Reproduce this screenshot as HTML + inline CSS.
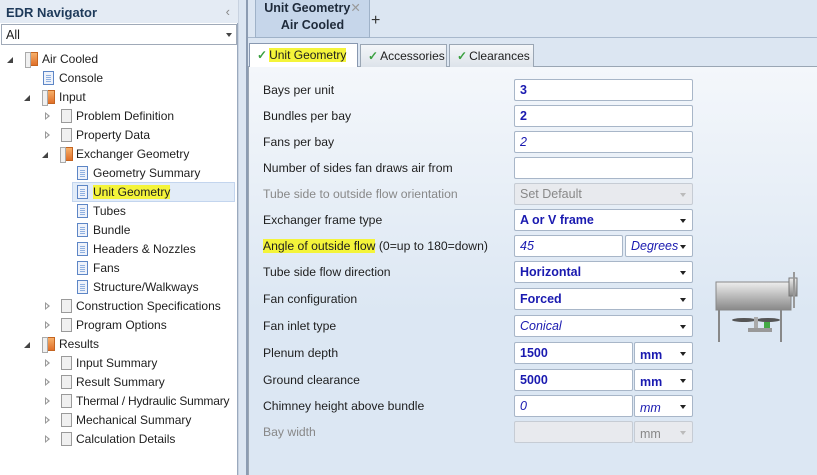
<!DOCTYPE html>
<html><head><style>
*{box-sizing:border-box;margin:0;padding:0}
body{width:817px;height:475px;overflow:hidden;font-family:"Liberation Sans",sans-serif;font-size:12px;color:#1e1e1e;background:#dce6f2;position:relative}
.abs{position:absolute}
#left{left:0;top:0;width:238px;height:475px;background:#fff;border-right:1px solid #9aa9bd}
#lh{left:0;top:0;width:238px;height:23px;background:#e4ebf4;font-weight:bold;font-size:13px;padding:5px 6px;color:#1e3a5a}
#dd{left:1px;top:24px;width:236px;height:21px;border:1px solid #a0aab8;background:#fff;padding:3px 4px;font-size:12.5px}
#dd:after{content:"";position:absolute;right:4px;top:8px;border:3.5px solid transparent;border-top:4px solid #444}
.tr{position:absolute;font-size:12px;white-space:nowrap;line-height:16px}
.tri{position:absolute;width:0;height:0}
.exp{border-left:6px solid transparent;border-bottom:6px solid #444}
.col{border-top:4px solid transparent;border-bottom:4px solid transparent;border-left:5px solid #999}
.col:after{content:"";position:absolute;left:-4px;top:-2px;border-top:2px solid transparent;border-bottom:2px solid transparent;border-left:2px solid #fff}
.ic{position:absolute;width:11px;height:14px}
.fo{background:linear-gradient(#f7b06a,#e0702a);border:1px solid #c46420}
.fo:before{content:"";position:absolute;left:-3px;top:-1px;width:4px;height:14px;background:#f0f0f0;border:1px solid #aaa}
.pg{background:#eef2fa;border:1px solid #5d86c6}
.pg:before{content:"";position:absolute;left:2px;top:3px;width:5px;height:7px;background:repeating-linear-gradient(#8fb0e0 0 1px,transparent 1px 2px)}
.gp{background:#f0f0f0;border:1px solid #9a9a9a}
#sep{left:238px;top:0;width:10px;height:475px;background:#dce6f2;border-right:2px solid #8c9cb2;border-left:1px solid #c8d2e0}
#tabbar{left:248px;top:0;width:569px;height:38px;background:#dce6f2;border-bottom:1px solid #a8b8cc}
#doctab{left:255px;top:0;width:115px;height:38px;background:#c6d6ea;border:1px solid #9fb2c8;border-top:none;font-weight:bold;font-size:12.5px;text-align:center;line-height:17px;padding-top:0;color:#1e2a3a}
.it{position:absolute;top:44px;height:23px;border:1px solid #9aa6b4;border-bottom:none;background:linear-gradient(#f4f6f9,#dde3ea);font-size:12px;padding:4px 4px 0 7px;white-space:nowrap}
.it b{color:#3aa040;font-weight:bold;margin-right:2px}
#panel{left:248px;top:66px;width:569px;height:409px;border:1px solid #9aa6b4;border-right:none;border-bottom:none;background:linear-gradient(#f4f7fb,#dce7f3 60%)}
.lb{position:absolute;left:263px;font-size:12.2px}
.in{position:absolute;height:22px;background:#fff;border:1px solid #a8b6c8;font-size:12.5px;color:#1a1ab0;padding:3px 5px;border-radius:2px}
.bd{font-weight:bold}
.itl{font-style:italic}
.sel:after{content:"";position:absolute;right:6px;top:9px;border:3.5px solid transparent;border-top:4px solid #222}
.dis{background:#e8eaee;color:#888;border-color:#c6ccd4}
.dis.sel:after{border-top-color:#bbb}
.hl{background:#f4f43a}
</style></head><body>
<div id="left" class="abs"></div>
<div id="lh" class="abs">EDR Navigator<span style="position:absolute;right:8px;top:4px;color:#888;font-weight:normal">‹</span></div>
<div id="dd" class="abs">All</div>
<div class="abs" style="left:72px;top:182px;width:163px;height:20px;background:#e2ecf8;border:1px solid #c3d5ee"></div>

<div class="tri exp" style="left:7px;top:57px"></div><div class="ic fo" style="left:27px;top:52px"></div><div class="tr" style="left:42px;top:51px">Air Cooled</div>
<div class="ic pg" style="left:43px;top:71px"></div><div class="tr" style="left:59px;top:70px">Console</div>
<div class="tri exp" style="left:24px;top:95px"></div><div class="ic fo" style="left:44px;top:90px"></div><div class="tr" style="left:59px;top:89px">Input</div>
<div class="tri col" style="left:45px;top:112px"></div><div class="ic gp" style="left:61px;top:109px"></div><div class="tr" style="left:76px;top:108px">Problem Definition</div>
<div class="tri col" style="left:45px;top:131px"></div><div class="ic gp" style="left:61px;top:128px"></div><div class="tr" style="left:76px;top:127px">Property Data</div>
<div class="tri exp" style="left:42px;top:152px"></div><div class="ic fo" style="left:62px;top:147px"></div><div class="tr" style="left:76px;top:146px">Exchanger Geometry</div>
<div class="ic pg" style="left:77px;top:166px"></div><div class="tr" style="left:93px;top:165px">Geometry Summary</div>
<div class="ic pg" style="left:77px;top:185px"></div><div class="tr" style="left:93px;top:184px"><span class="hl">Unit Geometry</span></div>
<div class="ic pg" style="left:77px;top:204px"></div><div class="tr" style="left:93px;top:203px">Tubes</div>
<div class="ic pg" style="left:77px;top:223px"></div><div class="tr" style="left:93px;top:222px">Bundle</div>
<div class="ic pg" style="left:77px;top:242px"></div><div class="tr" style="left:93px;top:241px">Headers &amp; Nozzles</div>
<div class="ic pg" style="left:77px;top:261px"></div><div class="tr" style="left:93px;top:260px">Fans</div>
<div class="ic pg" style="left:77px;top:280px"></div><div class="tr" style="left:93px;top:279px">Structure/Walkways</div>
<div class="tri col" style="left:45px;top:302px"></div><div class="ic gp" style="left:61px;top:299px"></div><div class="tr" style="left:76px;top:298px">Construction Specifications</div>
<div class="tri col" style="left:45px;top:321px"></div><div class="ic gp" style="left:61px;top:318px"></div><div class="tr" style="left:76px;top:317px">Program Options</div>
<div class="tri exp" style="left:24px;top:342px"></div><div class="ic fo" style="left:44px;top:337px"></div><div class="tr" style="left:59px;top:336px">Results</div>
<div class="tri col" style="left:45px;top:359px"></div><div class="ic gp" style="left:61px;top:356px"></div><div class="tr" style="left:76px;top:355px">Input Summary</div>
<div class="tri col" style="left:45px;top:378px"></div><div class="ic gp" style="left:61px;top:375px"></div><div class="tr" style="left:76px;top:374px">Result Summary</div>
<div class="tri col" style="left:45px;top:397px"></div><div class="ic gp" style="left:61px;top:394px"></div><div class="tr" style="left:76px;top:393px;letter-spacing:-0.2px">Thermal / Hydraulic Summary</div>
<div class="tri col" style="left:45px;top:416px"></div><div class="ic gp" style="left:61px;top:413px"></div><div class="tr" style="left:76px;top:412px">Mechanical Summary</div>
<div class="tri col" style="left:45px;top:435px"></div><div class="ic gp" style="left:61px;top:432px"></div><div class="tr" style="left:76px;top:431px">Calculation Details</div>

<div id="sep" class="abs"></div>
<div id="tabbar" class="abs"></div>
<div id="doctab" class="abs">Unit Geometry<span style="color:#999;font-weight:normal">✕</span><br>Air Cooled</div>
<div class="abs" style="left:371px;top:12px;font-size:16px;color:#333">+</div>
<div id="panel" class="abs"></div>
<div class="it" style="left:249px;top:43px;height:24px;width:109px;background:#fff;border-color:#8898b0"><b>✓</b><span class="hl">Unit Geometry</span></div>
<div class="it" style="left:360px;width:87px"><b>✓</b>Accessories</div>
<div class="it" style="left:449px;width:85px"><b>✓</b>Clearances</div>

<div class="lb" style="top:83px">Bays per unit</div>
<div class="lb" style="top:109px">Bundles per bay</div>
<div class="lb" style="top:135px">Fans per bay</div>
<div class="lb" style="top:161px">Number of sides fan draws air from</div>
<div class="lb" style="top:187px;color:#888">Tube side to outside flow orientation</div>
<div class="lb" style="top:213px">Exchanger frame type</div>
<div class="lb" style="top:239px"><span class="hl">Angle of outside flow</span> (0=up to 180=down)</div>
<div class="lb" style="top:265px">Tube side flow direction</div>
<div class="lb" style="top:292px">Fan configuration</div>
<div class="lb" style="top:319px">Fan inlet type</div>
<div class="lb" style="top:346px">Plenum depth</div>
<div class="lb" style="top:373px">Ground clearance</div>
<div class="lb" style="top:399px">Chimney height above bundle</div>
<div class="lb" style="top:425px;color:#888">Bay width</div>

<div class="in bd" style="left:514px;top:79px;width:179px">3</div>
<div class="in bd" style="left:514px;top:105px;width:179px">2</div>
<div class="in itl" style="left:514px;top:131px;width:179px">2</div>
<div class="in" style="left:514px;top:157px;width:179px"></div>
<div class="in dis sel" style="left:514px;top:183px;width:179px">Set Default</div>
<div class="in bd sel" style="left:514px;top:209px;width:179px">A or V frame</div>
<div class="in itl" style="left:514px;top:235px;width:109px">45</div>
<div class="in itl sel" style="left:625px;top:235px;width:68px">Degrees</div>
<div class="in bd sel" style="left:514px;top:261px;width:179px">Horizontal</div>
<div class="in bd sel" style="left:514px;top:288px;width:179px">Forced</div>
<div class="in itl sel" style="left:514px;top:315px;width:179px">Conical</div>
<div class="in bd" style="left:514px;top:342px;width:119px">1500</div>
<div class="in bd sel" style="left:634px;top:342px;width:59px;padding-top:5px">mm</div>
<div class="in bd" style="left:514px;top:369px;width:119px">5000</div>
<div class="in bd sel" style="left:634px;top:369px;width:59px;padding-top:5px">mm</div>
<div class="in itl" style="left:514px;top:395px;width:119px">0</div>
<div class="in itl sel" style="left:634px;top:395px;width:59px;padding-top:5px">mm</div>
<div class="in dis" style="left:514px;top:421px;width:119px"></div>
<div class="in dis sel" style="left:634px;top:421px;width:59px;padding-top:5px">mm</div>

<svg class="abs" style="left:714px;top:270px" width="90" height="75">
<defs><linearGradient id="g" x1="0" y1="0" x2="0" y2="1"><stop offset="0" stop-color="#eee"/><stop offset=".5" stop-color="#bbb"/><stop offset="1" stop-color="#888"/></linearGradient></defs>
<rect x="2" y="12" width="75" height="28" fill="url(#g)" stroke="#888"/>
<rect x="75" y="8" width="8" height="18" fill="url(#g)" stroke="#777"/>
<rect x="79" y="2" width="2" height="36" fill="#999"/>
<rect x="4" y="40" width="2" height="32" fill="#888"/><rect x="66" y="40" width="2" height="32" fill="#888"/>
<ellipse cx="30" cy="50" rx="12" ry="2" fill="#555"/><ellipse cx="54" cy="50" rx="12" ry="2" fill="#555"/>
<rect x="40" y="47" width="4" height="14" fill="#aaa"/>
<rect x="34" y="58" width="24" height="4" fill="#999"/>
<rect x="50" y="52" width="6" height="6" fill="#4a4"/>
</svg>
</body></html>
